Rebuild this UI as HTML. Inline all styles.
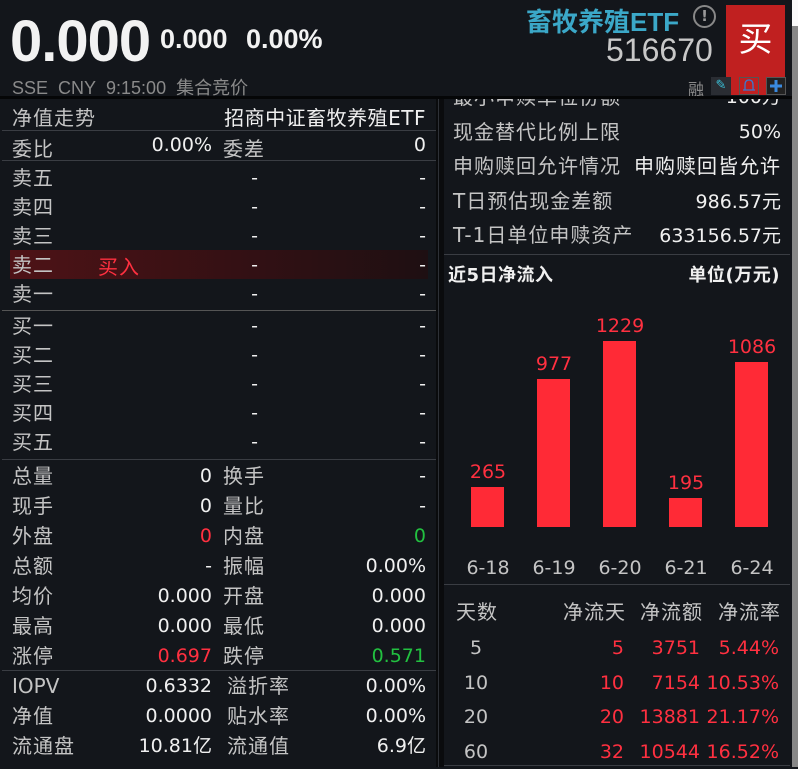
<!DOCTYPE html>
<html><head><meta charset="utf-8"><style>
*{margin:0;padding:0;box-sizing:border-box}
body{width:798px;height:767px;background:#13161b;font-family:"DejaVu Sans","Noto Sans CJK SC",sans-serif;color:#e8e8e8;position:relative;overflow:hidden}
.a{position:absolute;white-space:nowrap}
.l{color:#c4c4c4;font-size:20px;letter-spacing:1px}
.d{color:#c4c4c4;font-size:19px}
.v{color:#f0f0f0;font-size:19px;text-align:right}
.r{color:#ff3040}.g{color:#22c040}
.hl{position:absolute;height:1px;background:#3a3d43}
.lib{font-family:"Liberation Sans","Noto Sans CJK SC",sans-serif}
</style></head><body>
<!-- header -->
<div class="a lib" style="left:10px;top:8px;font-size:58px;font-weight:bold;color:#f2f2f2;letter-spacing:-1px">0.000</div>
<div class="a lib" style="left:160px;top:24px;font-size:27px;font-weight:bold;color:#f2f2f2">0.000</div>
<div class="a lib" style="left:246px;top:24px;font-size:27px;font-weight:bold;color:#f2f2f2">0.00%</div>
<div class="a lib" style="left:526px;top:2px;font-size:26px;font-weight:bold;color:#3ba8c8">畜牧养殖ETF</div>
<div class="a" style="left:693px;top:5px;width:23px;height:23px;border:2px solid #888;border-radius:50%;color:#999;font-size:15px;font-weight:bold;text-align:center;line-height:19px">!</div>
<div class="a" style="left:726px;top:5px;width:59px;height:90px;background:#c02020;"></div>
<div class="a lib" style="left:726px;top:12px;width:59px;text-align:center;font-size:34px;color:#fff">买</div>
<div class="a lib" style="left:606px;top:32px;font-size:32px;color:#c8c8c8">516670</div>
<div class="a lib" style="left:12px;top:74px;font-size:18px;color:#8a8a8a">SSE&nbsp; CNY&nbsp; 9:15:00&nbsp; 集合竞价</div>
<div class="a lib" style="left:688px;top:76px;font-size:16px;color:#8a8a8a">融</div>
<div class="a" style="left:711px;top:77px;width:20px;height:18px;background:#2a2d33;color:#3bc0d8;font-size:13px;text-align:center;line-height:18px">✎</div>
<div class="a" style="left:739px;top:77px;width:20px;height:18px;border:1px solid #555"><svg width="18" height="16" viewBox="0 0 18 16"><path d="M5 12 L5 7 Q5 2 9 2 Q13 2 13 7 L13 12 Z M3 12 H15" fill="none" stroke="#3a7ad0" stroke-width="1.3"/></svg></div>
<div class="a" style="left:766px;top:77px;width:20px;height:18px;border:1px solid #555;background:#222"><svg width="18" height="16" viewBox="0 0 18 16"><path d="M9 2 V14 M3 8 H15" stroke="#3a8ae0" stroke-width="3"/></svg></div>
<div class="a" style="left:0;top:96px;width:792px;height:3px;background:#050607"></div>
<div class="a" style="left:792px;top:0;width:6px;height:26px;background:#fafafa"></div>
<div class="a" style="left:792px;top:26px;width:6px;height:741px;background:#888"></div>
<!-- divider -->
<div class="a" style="left:436px;top:99px;width:8px;height:668px;background:#0a0b0d"></div>
<div class="a" style="left:438px;top:99px;width:1px;height:668px;background:#2e3137"></div>
<!-- left -->
<div class="a l" style="left:12px;top:102px">净值走势</div>
<div class="a v" style="right:372px;top:102px;font-size:20px;letter-spacing:0.5px">招商中证畜牧养殖ETF</div>
<div class="hl" style="left:2px;top:130px;width:434px"></div>
<div class="a l" style="left:12px;top:133px">委比</div><div class="a v" style="right:586px;top:134px">0.00%</div>
<div class="a l" style="left:223px;top:133px">委差</div><div class="a v" style="right:372px;top:134px">0</div>
<div class="hl" style="left:2px;top:160px;width:434px"></div>
<div class="a" style="left:10px;top:250px;width:418px;height:29px;background:linear-gradient(90deg,#4e1216,#1e0f12)"></div>
<div class="a l" style="left:12px;top:164px;line-height:29px">卖五<br>卖四<br>卖三<br>卖二<br>卖一</div>
<div class="a" style="left:98px;top:251px;font-size:20px;letter-spacing:1px;color:#ff3040">买入</div>
<div class="a v" style="left:240px;top:164px;width:18px;line-height:29px">-<br>-<br>-<br>-<br>-</div>
<div class="a v" style="left:408px;top:164px;width:18px;line-height:29px">-<br>-<br>-<br>-<br>-</div>
<div class="hl" style="left:2px;top:310px;width:434px;background:#555"></div>
<div class="a l" style="left:12px;top:312px;line-height:29px">买一<br>买二<br>买三<br>买四<br>买五</div>
<div class="a v" style="left:240px;top:312px;width:18px;line-height:29px">-<br>-<br>-<br>-<br>-</div>
<div class="a v" style="left:408px;top:312px;width:18px;line-height:29px">-<br>-<br>-<br>-<br>-</div>
<div class="hl" style="left:2px;top:459px;width:434px"></div>
<div class="a l" style="left:12px;top:461px;line-height:30px">总量<br>现手<br>外盘<br>总额<br>均价<br>最高<br>涨停</div>
<div class="a v" style="right:586px;top:461px;line-height:30px">0<br>0<br><span class="r">0</span><br>-<br>0.000<br>0.000<br><span class="r">0.697</span></div>
<div class="a l" style="left:223px;top:461px;line-height:30px">换手<br>量比<br>内盘<br>振幅<br>开盘<br>最低<br>跌停</div>
<div class="a v" style="right:372px;top:461px;line-height:30px">-<br>-<br><span class="g">0</span><br>0.00%<br>0.000<br>0.000<br><span class="g">0.571</span></div>
<div class="hl" style="left:2px;top:670px;width:434px"></div>
<div class="a l" style="left:12px;top:671px;line-height:30px;letter-spacing:0">IOPV</div>
<div class="a l" style="left:12px;top:701px;line-height:30px">净值<br>流通盘</div>
<div class="a v" style="right:586px;top:671px;line-height:30px">0.6332<br>0.0000<br>10.81亿</div>
<div class="a l" style="left:227px;top:671px;line-height:30px">溢折率<br>贴水率<br>流通值</div>
<div class="a v" style="right:372px;top:671px;line-height:30px">0.00%<br>0.00%<br>6.9亿</div>
<!-- right -->
<div class="a" style="left:444px;top:99px;width:347px;height:155px;overflow:hidden">
<div class="a l" style="left:9px;top:-19px;line-height:34.5px">最小申赎单位份额<br>现金替代比例上限<br>申购赎回允许情况<br>T日预估现金差额<br>T-1日单位申赎资产</div>
<div class="a v" style="right:10px;top:-19px;line-height:34.5px">100万<br>50%<br><span style="font-size:20px;letter-spacing:1px">申购赎回皆允许</span><br>986.57元<br>633156.57元</div>
</div>
<div class="hl" style="left:444px;top:254px;width:346px"></div>
<div class="a" style="left:448px;top:261px;font-size:18px;font-weight:bold;color:#f0f0f0;letter-spacing:0.5px">近5日净流入</div>
<div class="a" style="right:18px;top:261px;font-size:18px;font-weight:bold;color:#f0f0f0;letter-spacing:0.5px">单位(万元)</div>
<div class="a" style="left:471px;top:487px;width:33px;height:40px;background:#ff2a36"></div>
<div class="a" style="left:537px;top:379px;width:33px;height:148px;background:#ff2a36"></div>
<div class="a" style="left:603px;top:341px;width:33px;height:186px;background:#ff2a36"></div>
<div class="a" style="left:669px;top:498px;width:33px;height:29px;background:#ff2a36"></div>
<div class="a" style="left:735px;top:362px;width:33px;height:165px;background:#ff2a36"></div>
<div class="a r" style="left:458px;top:461px;width:60px;text-align:center;font-size:19px">265</div>
<div class="a r" style="left:524px;top:353px;width:60px;text-align:center;font-size:19px">977</div>
<div class="a r" style="left:590px;top:315px;width:60px;text-align:center;font-size:19px">1229</div>
<div class="a r" style="left:656px;top:472px;width:60px;text-align:center;font-size:19px">195</div>
<div class="a r" style="left:722px;top:336px;width:60px;text-align:center;font-size:19px">1086</div>
<div class="a d" style="left:458px;top:557px;width:60px;text-align:center">6-18</div>
<div class="a d" style="left:524px;top:557px;width:60px;text-align:center">6-19</div>
<div class="a d" style="left:590px;top:557px;width:60px;text-align:center">6-20</div>
<div class="a d" style="left:656px;top:557px;width:60px;text-align:center">6-21</div>
<div class="a d" style="left:722px;top:557px;width:60px;text-align:center">6-24</div>
<div class="hl" style="left:444px;top:584px;width:346px"></div>
<div class="a l" style="left:456px;top:596px">天数</div>
<div class="a l" style="right:172px;top:596px">净流天</div>
<div class="a l" style="right:95px;top:596px">净流额</div>
<div class="a l" style="right:17px;top:596px">净流率</div>
<div class="a d" style="left:455px;top:631px;width:42px;text-align:center;line-height:34.5px">5<br>10<br>20<br>60</div>
<div class="a r" style="right:174px;top:631px;font-size:19px;text-align:right;line-height:34.5px">5<br>10<br>20<br>32</div>
<div class="a r" style="right:98px;top:631px;font-size:19px;text-align:right;line-height:34.5px">3751<br>7154<br>13881<br>10544</div>
<div class="a r" style="right:19px;top:631px;font-size:19px;text-align:right;line-height:34.5px">5.44%<br>10.53%<br>21.17%<br>16.52%</div>
<div class="hl" style="left:444px;top:765px;width:346px"></div>
</body></html>
